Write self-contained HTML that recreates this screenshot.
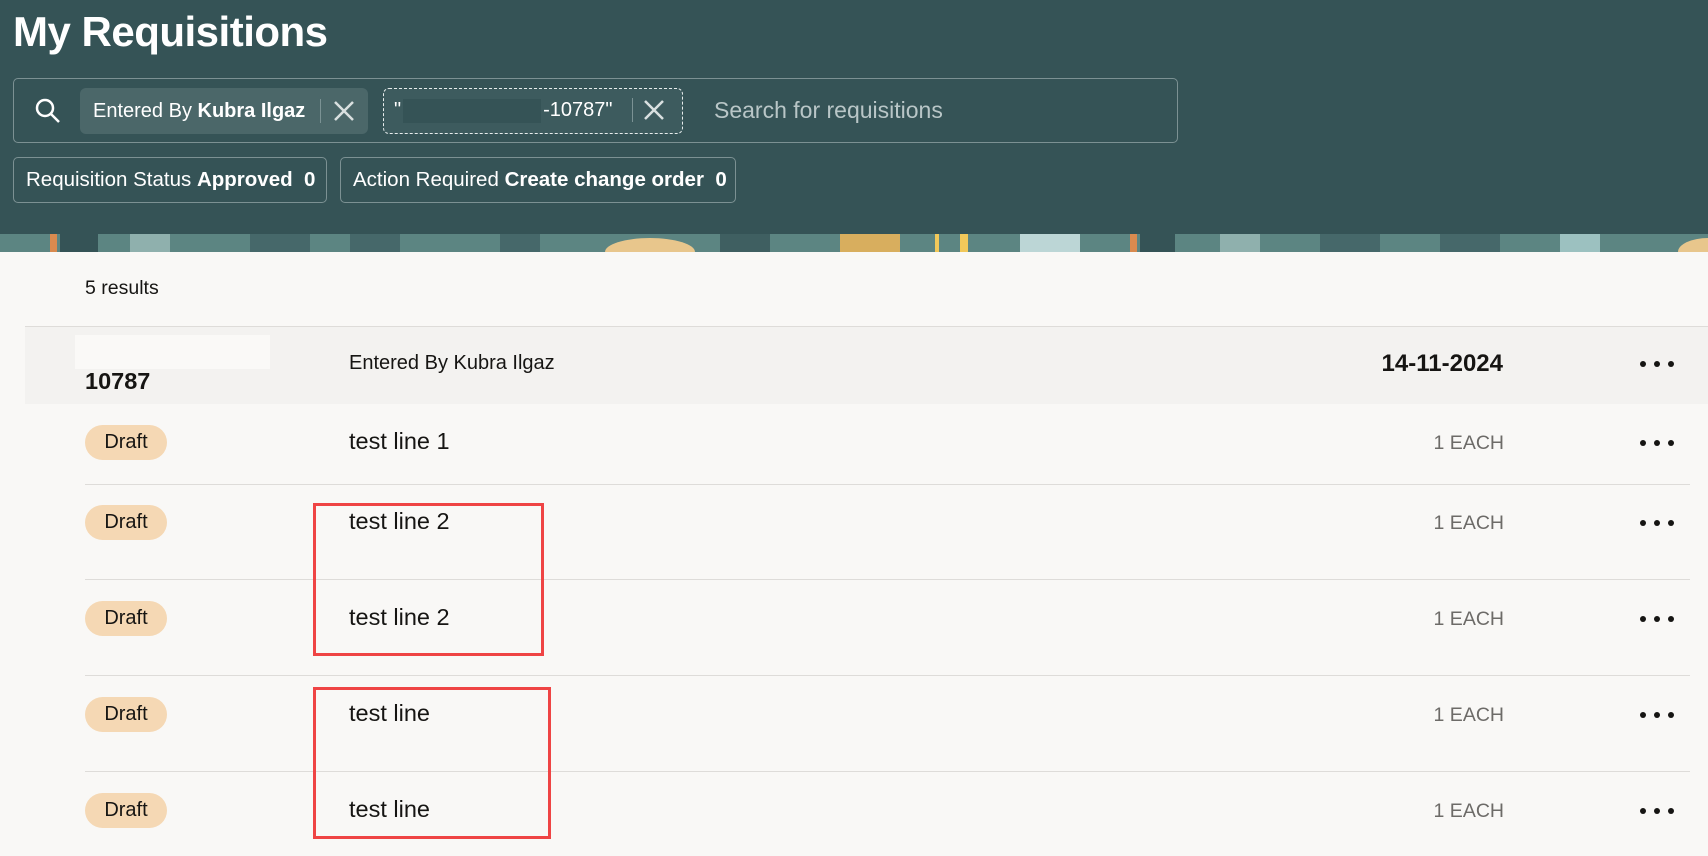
<!DOCTYPE html>
<html><head><meta charset="utf-8"><style>
*{box-sizing:border-box;margin:0;padding:0}
body{width:1708px;height:856px;overflow:hidden;background:#f9f8f6;font-family:"Liberation Sans",sans-serif;color:#161513;position:relative}
.hdr{position:absolute;left:0;top:0;width:1708px;height:234px;background:#355356}
.title{position:absolute;left:13px;top:8px;font-size:42px;font-weight:bold;color:#fff;letter-spacing:-0.5px}
.search{position:absolute;left:13px;top:78px;width:1165px;height:65px;border:1px solid #7c9193;border-radius:5px}
.chip{position:absolute;top:9px;height:46px;border-radius:6px;color:#fff;font-size:20px;line-height:46px;padding-left:13px;white-space:nowrap}
.c1{left:66px;width:288px;background:#4b6769}
.c2{left:369px;width:300px;border:1.5px dashed #e6ecec;line-height:43px;background:#3d5b5e}
.sep{position:absolute;top:11px;width:1px;height:24px;background:#7b9294}
.ph{position:absolute;left:700px;top:0;line-height:63px;font-size:23px;color:#b9c6c7}
.f{position:absolute;top:157px;height:46px;border:1px solid #7c9193;border-radius:5px;color:#fff;font-size:20.5px;line-height:44px;padding-left:12px;white-space:nowrap}
.band{position:absolute;left:0;top:234px;width:1708px;height:18px;overflow:hidden}
.res{position:absolute;left:85px;top:277px;font-size:19.5px}
.grp{position:absolute;left:25px;top:326px;width:1683px;height:78px;background:#f3f2f0;border-top:1px solid #dedcd9}
.row{position:absolute;left:85px;width:1605px;height:1px;background:#dedcd9}
.pill{position:absolute;left:85px;width:82px;height:35px;border-radius:18px;background:#f5d8b4;font-size:20px;line-height:35px;text-align:center}
.line{position:absolute;left:349px;font-size:23.5px}
.each{position:absolute;right:204px;font-size:19.5px;color:#6d6b68}
.dots{position:absolute;left:1640px;width:34px;height:6px}
.dots i{position:absolute;top:0;width:6px;height:6px;border-radius:3px;background:#161513}
.red{position:absolute;border:3px solid #ef4444}
</style></head><body>
<div class="hdr">
<div class="title">My Requisitions</div>
<div class="search">
<svg style="position:absolute;left:20px;top:18px" width="28" height="28" viewBox="0 0 28 28"><circle cx="11" cy="11" r="8" fill="none" stroke="#fff" stroke-width="2.5"/><line x1="17" y1="17" x2="25" y2="25" stroke="#fff" stroke-width="2.5"/></svg>
<div class="chip c1">Entered By <b>Kubra Ilgaz</b><div class="sep" style="left:240px"></div>
<svg style="position:absolute;left:254px;top:13px" width="20" height="20"><path d="M1 1L19 19M19 1L1 19" stroke="#d9e0e0" stroke-width="2.5"/></svg></div>
<div class="chip c2" style="padding-left:10px">"<span style="display:inline-block;width:138px;height:24px;background:#355356;vertical-align:middle;margin:0 2px"></span>-10787"<div class="sep" style="left:248px;top:9px"></div>
<svg style="position:absolute;left:260px;top:11px" width="20" height="20"><path d="M1 1L19 19M19 1L1 19" stroke="#d9e0e0" stroke-width="2.5"/></svg></div>
<div class="ph">Search for requisitions</div>
</div>
<div class="f" style="left:13px;width:314px">Requisition Status <b>Approved</b>&nbsp; <b>0</b></div>
<div class="f" style="left:340px;width:396px">Action Required <b>Create change order</b>&nbsp; <b>0</b></div>
</div>
<svg class="band" width="1708" height="18" viewBox="0 0 1708 18">
<rect width="1708" height="18" fill="#5c8582"/>
<rect x="50" width="7" height="18" fill="#d98a4f"/><rect x="60" width="38" height="18" fill="#355356"/>
<rect x="130" width="40" height="18" fill="#8fb0ad"/><rect x="250" width="60" height="18" fill="#46686a"/>
<rect x="350" width="50" height="18" fill="#46686a"/><rect x="500" width="40" height="18" fill="#46686a"/>
<ellipse cx="650" cy="18" rx="45" ry="14" fill="#e8c68c"/><rect x="720" width="50" height="18" fill="#3f5f61"/>
<rect x="840" width="60" height="18" fill="#d8ae5e"/><rect x="935" y="0" width="4" height="18" fill="#f1c85a"/><rect x="960" width="8" height="18" fill="#f1c85a"/>
<rect x="1020" width="60" height="18" fill="#bcd6d6"/><rect x="1130" width="7" height="18" fill="#d98a4f"/><rect x="1140" width="35" height="18" fill="#355356"/>
<rect x="1220" width="40" height="18" fill="#8fb0ad"/><rect x="1320" width="60" height="18" fill="#46686a"/><rect x="1440" width="60" height="18" fill="#46686a"/>
<rect x="1560" width="40" height="18" fill="#9cc1c0"/><ellipse cx="1708" cy="18" rx="30" ry="14" fill="#e8c68c"/>
</svg>
<div class="res">5 results</div>
<div class="grp">
<div style="position:absolute;left:50px;top:8px;width:195px;height:34px;background:#faf9f7"></div>
<div style="position:absolute;left:60px;top:41px;font-size:23.5px;font-weight:bold">10787</div>
<div style="position:absolute;left:324px;top:25px;font-size:20px">Entered By Kubra Ilgaz</div>
<div style="position:absolute;right:205px;top:23px;font-size:24px;font-weight:bold">14-11-2024</div>
</div>
<div class="dots" style="top:361px"><i style="left:0"></i><i style="left:14px"></i><i style="left:28px"></i></div>
<div class="pill" style="top:425px">Draft</div><div class="line" style="top:428px">test line 1</div><div class="each" style="top:432px">1 EACH</div><div class="dots" style="top:440px"><i style="left:0"></i><i style="left:14px"></i><i style="left:28px"></i></div>
<div class="row" style="top:484px"></div>
<div class="pill" style="top:505px">Draft</div><div class="line" style="top:508px">test line 2</div><div class="each" style="top:512px">1 EACH</div><div class="dots" style="top:520px"><i style="left:0"></i><i style="left:14px"></i><i style="left:28px"></i></div>
<div class="row" style="top:579px"></div>
<div class="pill" style="top:601px">Draft</div><div class="line" style="top:604px">test line 2</div><div class="each" style="top:608px">1 EACH</div><div class="dots" style="top:616px"><i style="left:0"></i><i style="left:14px"></i><i style="left:28px"></i></div>
<div class="row" style="top:675px"></div>
<div class="pill" style="top:697px">Draft</div><div class="line" style="top:700px">test line</div><div class="each" style="top:704px">1 EACH</div><div class="dots" style="top:712px"><i style="left:0"></i><i style="left:14px"></i><i style="left:28px"></i></div>
<div class="row" style="top:771px"></div>
<div class="pill" style="top:793px">Draft</div><div class="line" style="top:796px">test line</div><div class="each" style="top:800px">1 EACH</div><div class="dots" style="top:808px"><i style="left:0"></i><i style="left:14px"></i><i style="left:28px"></i></div>
<div class="red" style="left:313px;top:503px;width:231px;height:153px"></div>
<div class="red" style="left:313px;top:687px;width:238px;height:152px"></div>
</body></html>
